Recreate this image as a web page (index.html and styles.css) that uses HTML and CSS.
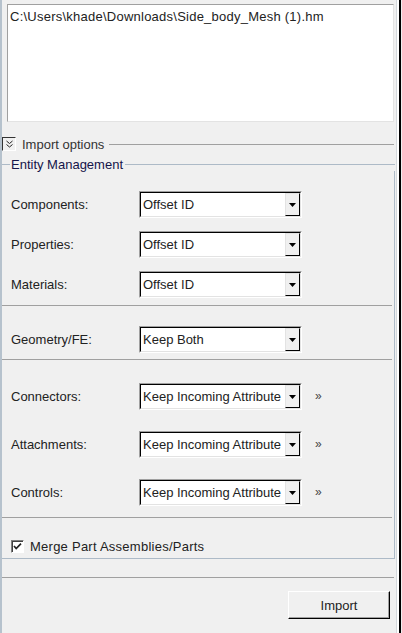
FILE: index.html
```html
<!DOCTYPE html>
<html>
<head>
<meta charset="utf-8">
<link rel="stylesheet" href="styles.css">
</head>
<body>
<div class="page">
  <div class="panel">
    <div class="pathbox">C:\Users\khade\Downloads\Side_body_Mesh (1).hm</div>

    <div class="opts">
      <div class="opts-icon">
        <svg width="7" height="8" viewBox="0 0 7 8"><polyline points="0.5,1 3.5,3.5 6.5,1" fill="none" stroke="#222" stroke-width="1"/><polyline points="0.5,4.5 3.5,7 6.5,4.5" fill="none" stroke="#222" stroke-width="1"/></svg>
      </div>
      <span class="opts-label">Import options</span>
      <div class="opts-line"></div>
    </div>

    <div class="group">
      <div class="group-head">
        <div class="gline gline-short"></div>
        <span class="group-title">Entity Management</span>
        <div class="gline"></div>
      </div>
      <div class="group-body">
        <div class="rows rows-a">
          <div class="row"><span class="label">Components:</span><div class="combo"><div class="combo-in"><span class="combo-text">Offset ID</span><span class="combo-btn"><svg width="7" height="4" viewBox="0 0 7 4"><polygon points="0,0 7,0 3.5,4" fill="#000"/></svg></span></div></div></div>
          <div class="row"><span class="label">Properties:</span><div class="combo"><div class="combo-in"><span class="combo-text">Offset ID</span><span class="combo-btn"><svg width="7" height="4" viewBox="0 0 7 4"><polygon points="0,0 7,0 3.5,4" fill="#000"/></svg></span></div></div></div>
          <div class="row"><span class="label">Materials:</span><div class="combo"><div class="combo-in"><span class="combo-text">Offset ID</span><span class="combo-btn"><svg width="7" height="4" viewBox="0 0 7 4"><polygon points="0,0 7,0 3.5,4" fill="#000"/></svg></span></div></div></div>
        </div>
        <div class="sep sep-1"></div>
        <div class="row"><span class="label">Geometry/FE:</span><div class="combo"><div class="combo-in"><span class="combo-text">Keep Both</span><span class="combo-btn"><svg width="7" height="4" viewBox="0 0 7 4"><polygon points="0,0 7,0 3.5,4" fill="#000"/></svg></span></div></div></div>
        <div class="sep sep-2"></div>
        <div class="rows rows-b">
          <div class="row"><span class="label">Connectors:</span><div class="combo"><div class="combo-in"><span class="combo-text">Keep Incoming Attribute</span><span class="combo-btn"><svg width="7" height="4" viewBox="0 0 7 4"><polygon points="0,0 7,0 3.5,4" fill="#000"/></svg></span></div></div><span class="more">»</span></div>
          <div class="row"><span class="label">Attachments:</span><div class="combo"><div class="combo-in"><span class="combo-text">Keep Incoming Attribute</span><span class="combo-btn"><svg width="7" height="4" viewBox="0 0 7 4"><polygon points="0,0 7,0 3.5,4" fill="#000"/></svg></span></div></div><span class="more">»</span></div>
          <div class="row"><span class="label">Controls:</span><div class="combo"><div class="combo-in"><span class="combo-text">Keep Incoming Attribute</span><span class="combo-btn"><svg width="7" height="4" viewBox="0 0 7 4"><polygon points="0,0 7,0 3.5,4" fill="#000"/></svg></span></div></div><span class="more">»</span></div>
        </div>
        <div class="sep sep-3"></div>
        <div class="check-row">
          <span class="checkbox"><svg width="11" height="11" viewBox="0 0 11 11"><path d="M2 5 L4.2 7.6 L9 2.6" fill="none" stroke="#222" stroke-width="1.7"/></svg></span>
          <span class="check-label">Merge Part Assemblies/Parts</span>
        </div>
      </div>
    </div>

    <div class="hline"></div>
    <div class="actions"><button class="btn">Import</button></div>
  </div>
  <div class="edge-a"></div>
  <div class="edge-b"></div>
  <div class="edge-c"></div>
</div>
</body>
</html>
```
FILE: styles.css
```css
html, body {
  margin: 0;
  padding: 0;
}
body {
  background: #f0f0f0;
  font: 13px/15px "Liberation Sans", Arial, sans-serif;
  color: #222;
  width: 402px;
  height: 633px;
  overflow: hidden;
}
.page {
  display: flex;
  height: 633px;
}
.panel {
  width: 396px;
  box-sizing: border-box;
  border-left: 2px solid #b6c2cd;
  display: flex;
  flex-direction: column;
}
.edge-a { width: 1px; background: #d4d8dc; }
.edge-b { width: 2px; background: #ffffff; }
.edge-c { width: 2px; background: #000000; }

.pathbox {
  margin: 4px 2px 0 5px;
  height: 118px;
  box-sizing: border-box;
  background: #fff;
  border: 1px solid;
  border-color: #a0a0a0 #e3e3e3 #e3e3e3 #a0a0a0;
  padding: 4px 2px;
  white-space: nowrap;
  letter-spacing: 0.24px;
}

.opts {
  display: flex;
  align-items: center;
  height: 14px;
  margin: 15px 2px 0 0;
}
.opts-icon {
  width: 14px;
  height: 14px;
  box-sizing: border-box;
  border: 1px solid;
  border-color: #333 #fff #fff #333;
  display: flex;
  align-items: center;
  justify-content: center;
}
.opts-label {
  margin-left: 6px;
  color: #333;
}
.opts-line {
  flex: 1;
  height: 1px;
  background: #a0a0a0;
  margin-left: 5px;
}

.group {
  margin: 6px 1px 0 0;
}
.group-head {
  display: flex;
  align-items: center;
  height: 14px;
}
.gline {
  flex: 1;
  height: 1px;
  background: #adbac7;
}
.gline-short {
  flex: none;
  width: 8px;
}
.group-title {
  margin: 0 2px 0 1px;
  color: #14144a;
}
.group-body {
  border-right: 1px solid #adbac7;
  border-bottom: 1px solid #adbac7;
  padding: 20px 0 5px 9px;
}
.rows {
  display: flex;
  flex-direction: column;
}
.rows-a { gap: 13px; }
.rows-b { gap: 21px; }
.row {
  display: flex;
  align-items: center;
  height: 27px;
}
.label {
  width: 128px;
  flex: none;
}
.combo {
  width: 163px;
  height: 27px;
  box-sizing: border-box;
  border: 1px solid;
  border-color: #a0a0a0 #ffffff #ffffff #a0a0a0;
  flex: none;
}
.combo-in {
  height: 100%;
  box-sizing: border-box;
  border: 1px solid;
  border-color: #000 #e3e3e3 #e3e3e3 #000;
  background: #fff;
  display: flex;
  align-items: center;
}
.combo-text {
  flex: 1;
  padding-left: 2px;
  white-space: nowrap;
  overflow: hidden;
}
.combo-btn {
  width: 15px;
  align-self: stretch;
  box-sizing: border-box;
  border: 1px solid;
  border-color: #e3e3e3 #000 #000 #e3e3e3;
  background: #f0f0f0;
  display: flex;
  align-items: center;
  justify-content: center;
}
.more {
  margin-left: 13px;
  color: #444;
  font-size: 12px;
}
.sep {
  height: 1px;
  background: #a0a0a0;
  margin-left: -9px;
  margin-right: 2px;
}
.sep-1 { margin-top: 7px; margin-bottom: 20px; }
.sep-2 { margin-top: 6px; margin-bottom: 23px; }
.sep-3 { margin-top: 11px; margin-bottom: 22px; }

.check-row {
  display: flex;
  align-items: center;
  height: 13px;
}
.checkbox {
  width: 13px;
  height: 13px;
  box-sizing: border-box;
  border: 1px solid;
  border-color: #808080 #fff #fff #808080;
  box-shadow: inset 1px 1px #404040;
  background: #fff;
  display: flex;
  align-items: center;
  justify-content: center;
}
.check-label {
  margin-left: 6px;
  letter-spacing: 0.25px;
}

.hline {
  height: 1px;
  background: #a0a0a0;
  margin: 18px 2px 0 0;
}
.actions {
  display: flex;
  justify-content: flex-end;
  margin: 13px 6px 0 0;
}
.btn {
  width: 102px;
  height: 28px;
  box-sizing: border-box;
  border: 1px solid;
  border-color: #fff #000 #000 #fff;
  box-shadow: inset -1px -1px #a0a0a0;
  background: #f0f0f0;
  font: 13px/15px "Liberation Sans", Arial, sans-serif;
  color: #222;
  padding: 0;
  margin: 0;
}
```
